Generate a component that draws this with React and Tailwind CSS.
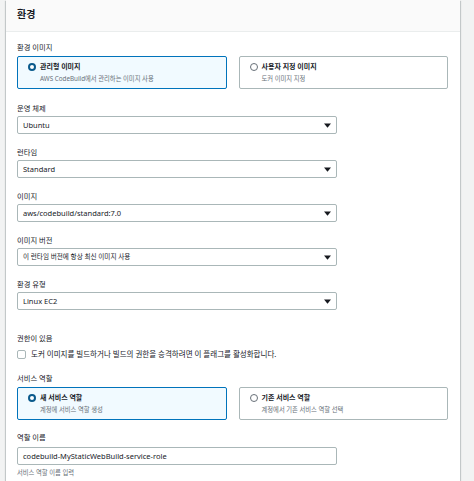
import React from 'react';

const font = "font-['Noto_Sans','Noto_Sans_CJK_KR',sans-serif]";

const Label = ({ children, className = '' }) => (
  <div className={`text-[7.3px] leading-[10px] text-[#16191f] ${className}`}>{children}</div>
);

const Caret = () => (
  <svg width="7" height="5" viewBox="0 0 7 5" className="shrink-0">
    <path d="M0 0.5 H7 L3.5 4.8 Z" fill="#16191f" />
  </svg>
);

const Select = ({ value, size = 'text-[7.5px]' }) => (
  <div className="w-[320px] h-[18px] flex items-center justify-between pl-[5px] pr-[5px] border border-[#aab7b8] rounded-[2px] bg-white">
    <span className={`${size} leading-[10px] text-[#16191f]`}>{value}</span>
    <Caret />
  </div>
);

const RadioCard = ({ selected, title, desc }) => (
  <div
    className={`h-[33px] flex flex-col pl-[10px] pt-[5px] rounded-[2px] border ${
      selected ? 'border-[#0073bb] bg-[#f1faff]' : 'border-[#aab7b8] bg-white'
    }`}
  >
    <div className="flex items-center gap-[4px] h-[10px]">
      {selected ? (
        <span className="w-[8px] h-[8px] rounded-full border-[2.5px] border-[#0a5a8c] bg-white shrink-0" />
      ) : (
        <span className="w-[8px] h-[8px] rounded-full border border-[#687078] bg-white shrink-0" />
      )}
      <span className="text-[7px] leading-[10px] font-bold text-[#16191f]">{title}</span>
    </div>
    <div className="pl-[12px] mt-[3px] text-[6.3px] leading-[8px] text-[#687078]">{desc}</div>
  </div>
);

export default function App() {
  return (
    <div className={`w-[474px] h-[481px] overflow-hidden bg-[#f2f3f3] pl-[6px] pr-[14px] ${font}`}>
      <div className="w-[454px] min-h-[500px] bg-white shadow-[0_1px_1px_0_rgba(0,28,36,0.3),1px_1px_1px_0_rgba(0,28,36,0.15),-1px_1px_1px_0_rgba(0,28,36,0.15)]">
        {/* header */}
        <div className="h-[32px] px-[11px] pt-[8px] bg-[#fafafa] border-b border-[#eaeded]">
          <h2 className="text-[10px] leading-[12px] font-bold text-[#16191f]">환경</h2>
        </div>

        <div className="px-[11px] pt-[10px]">
          <Label className="mb-[4px]">환경 이미지</Label>
          <div className="grid grid-cols-2 gap-[12px] w-[431px]">
            <RadioCard selected title="관리형 이미지" desc="AWS CodeBuild에서 관리하는 이미지 사용" />
            <RadioCard title="사용자 지정 이미지" desc="도커 이미지 지정" />
          </div>

          <Label className="mt-[14px] mb-[3px]">운영 체제</Label>
          <Select value="Ubuntu" />

          <Label className="mt-[13px] mb-[3px]">런타임</Label>
          <Select value="Standard" />

          <Label className="mt-[13px] mb-[3px]">이미지</Label>
          <Select value="aws/codebuild/standard:7.0" />

          <Label className="mt-[13px] mb-[3px]">이미지 버전</Label>
          <Select value="이 런타임 버전에 항상 최신 이미지 사용" size="text-[6.6px]" />

          <Label className="mt-[13px] mb-[3px]">환경 유형</Label>
          <Select value="Linux EC2" />

          <Label className="mt-[23px]">권한이 있음</Label>
          <div className="mt-[6px] h-[10px] flex items-center gap-[5px]">
            <span className="w-[9px] h-[9px] border border-[#aab7b8] rounded-[2px] bg-white shrink-0" />
            <span className="text-[7.5px] leading-[10px] text-[#16191f]">
              도커 이미지를 빌드하거나 빌드의 권한을 승격하려면 이 플래그를 활성화합니다.
            </span>
          </div>

          <Label className="mt-[14px] mb-[4px]">서비스 역할</Label>
          <div className="grid grid-cols-2 gap-[12px] w-[431px]">
            <RadioCard selected title="새 서비스 역할" desc="계정에 서비스 역할 생성" />
            <RadioCard title="기존 서비스 역할" desc="계정에서 기존 서비스 역할 선택" />
          </div>

          <Label className="mt-[12px] mb-[5px]">역할 이름</Label>
          <div className="w-[320px] h-[18px] flex items-center pl-[5px] border border-[#aab7b8] rounded-[2px] bg-white">
            <span className="text-[7.5px] leading-[10px] text-[#16191f]">codebuild-MyStaticWebBuild-service-role</span>
          </div>
          <div className="mt-[4px] text-[6.3px] leading-[8px] text-[#687078]">서비스 역할 이름 입력</div>
        </div>
      </div>
    </div>
  );
}
